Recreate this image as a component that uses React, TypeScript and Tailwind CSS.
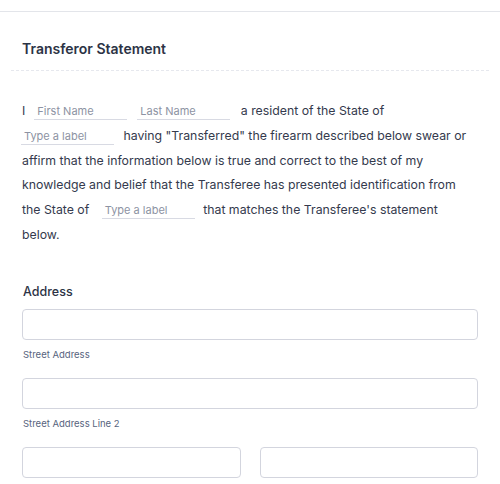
import React from "react";

function InlineInput({ placeholder, className = "mx-[5px]" }: { placeholder: string; className?: string }) {
  return (
    <span
      className={
        "inline-block align-middle w-[93px] border-b border-[#d8dae3] h-[17px] leading-[16px] text-[11px] text-[#8d93a3] pl-[3px] " +
        className
      }
    >
      {placeholder}
    </span>
  );
}

function Box() {
  return <div className="h-[31px] rounded-[4px] border border-[#d3d5de] bg-white" />;
}

export default function App() {
  return (
    <div className="w-[500px] h-[484px] bg-white overflow-hidden" style={{ fontFamily: "Inter, 'Noto Sans', sans-serif" }}>
      <div className="h-[12px] border-b border-[#e3e5ea]" />
      <div className="mx-[11px] border-b border-dashed border-[#e6e8ee] pt-[28px] pb-[13px] px-[11px]">
        <h2 className="text-[14px] font-semibold text-[#2c3345] leading-[17px]">Transferor Statement</h2>
      </div>
      <div className="pl-[22px] pr-[30px] pt-[28px] text-[12.3px] leading-[24.8px] text-[#343a4d]">
        <p>
          I<InlineInput placeholder="First Name" className="ml-[9px] mr-[6px]" />
          <InlineInput placeholder="Last Name" className="ml-[4px] mr-[7px]" /> a resident of the State of{" "}
          <InlineInput placeholder="Type a label" className="-ml-[1px] mr-[6px]" /> having "Transferred" the firearm described below
          swear or affirm that the information below is true and correct to the best of my knowledge and belief that the Transferee has
          presented identification from the State of <InlineInput placeholder="Type a label" className="ml-[9px] mr-[5px]" /> that matches
          the Transferee's statement below.
        </p>
      </div>
      <div className="px-[22px] pt-[36px]">
        <div className="text-[12.5px] font-medium text-[#2c3345] leading-[16px] pl-[1px]">Address</div>
        <div className="mt-[9px]">
          <Box />
          <div className="text-[9.5px] text-[#57647e] mt-[8px] leading-[13px] pl-[1px]">Street Address</div>
        </div>
        <div className="mt-[17px]">
          <Box />
          <div className="text-[9.5px] text-[#57647e] mt-[8px] leading-[13px] pl-[1px]">Street Address Line 2</div>
        </div>
        <div className="mt-[17px] grid grid-cols-2 gap-[19px]">
          <Box />
          <Box />
        </div>
      </div>
    </div>
  );
}
